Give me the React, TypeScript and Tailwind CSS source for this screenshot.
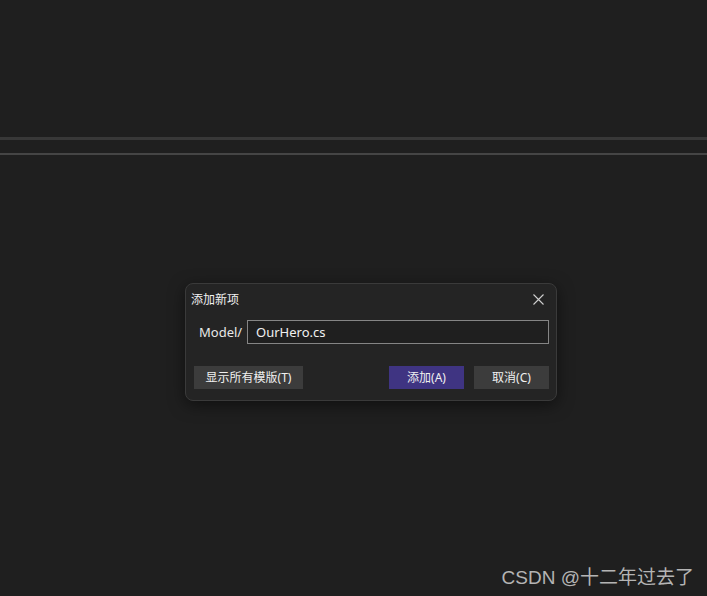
import React from "react";

export default function App() {
  const font = { fontFamily: '"Noto Sans", "Noto Sans CJK SC", sans-serif' };
  return (
    <div className="relative w-[707px] h-[596px] bg-[#1f1f1f] overflow-hidden" style={font}>
      <div className="h-[137px]" />
      <div className="h-[3px] bg-[#383838]" />
      <div className="h-[13px]" />
      <div className="h-[2px] bg-[#454545]" />
      <div className="pl-[185px] pt-[128px]">
        <div className="w-[372px] h-[118px] rounded-[8px] border border-[#3a3a3a] bg-[#242424] shadow-[0_4px_16px_rgba(0,0,0,0.5)] flex flex-col">
          <div className="flex items-center justify-between h-[30px] pl-[5px] pr-[12px] pt-[1px]">
            <span className="text-[12px] text-[#f0f0f0] leading-none">添加新项</span>
            <svg width="11" height="11" viewBox="0 0 11 11" className="text-[#cfcfcf]">
              <path d="M0.5 0.5 L10.5 10.5 M10.5 0.5 L0.5 10.5" stroke="currentColor" strokeWidth="1.1" />
            </svg>
          </div>
          <div className="flex items-center mt-[6px] pl-[13px]">
            <span className="text-[13px] text-[#e8e8e8] leading-none w-[48px]">Model/</span>
            <div className="w-[302px] h-[24px] border border-[#858585] bg-[#1f1f1f] flex items-center pl-[8px]">
              <span className="text-[13px] text-[#f0f0f0] leading-none">OurHero.cs</span>
            </div>
          </div>
          <div className="flex items-center mt-[22px] pl-[8px] pr-[7px]">
            <div className="w-[109px] h-[23px] bg-[#3c3c3c] flex items-center justify-center text-[12px] text-[#f0f0f0]">
              显示所有模版(T)
            </div>
            <div className="flex-1" />
            <div className="w-[75px] h-[23px] bg-[#3f3482] flex items-center justify-center text-[12px] text-[#f0f0f0]">
              添加(A)
            </div>
            <div className="w-[75px] h-[23px] ml-[10px] bg-[#3c3c3c] flex items-center justify-center text-[12px] text-[#f0f0f0]">
              取消(C)
            </div>
          </div>
        </div>
      </div>
      <div
        className="absolute right-[13px] bottom-[9px] text-[19px] text-[#b4b4b4] leading-none"
        style={{ fontFamily: '"Liberation Sans", "Noto Sans CJK SC", sans-serif' }}
      >
        CSDN @十二年过去了
      </div>
    </div>
  );
}
